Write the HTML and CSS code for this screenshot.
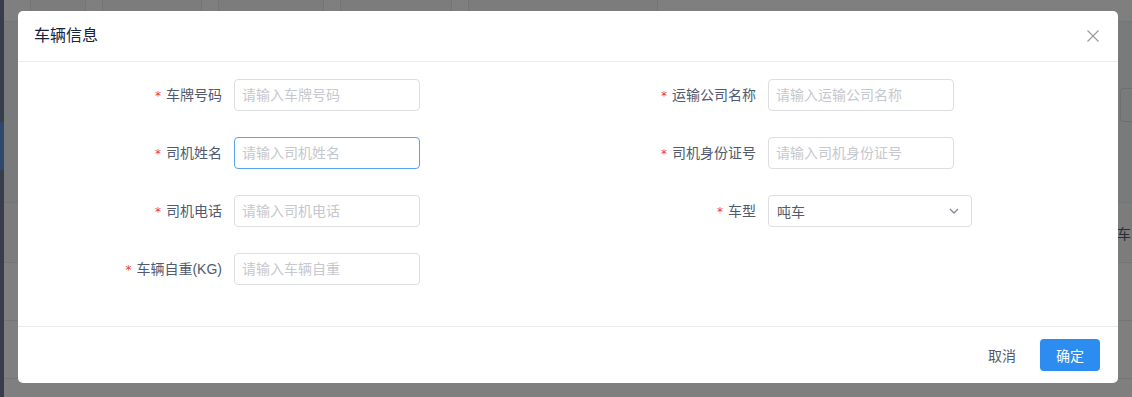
FILE: index.html
```html
<!DOCTYPE html>
<html lang="zh-CN">
<head>
    <meta charset="UTF-8">
    <title>车辆信息</title>
    <link rel="stylesheet" href="styles.css">
</head>
<body>
    <div class="page">
        <div class="sidebar">
            <div class="side-active"></div>
        </div>
        <div class="main">
            <div class="tabs">
                <span class="tab" style="width: 56px"></span>
                <span class="tab" style="width: 100px"></span>
                <span class="tab" style="width: 106px"></span>
                <span class="tab" style="width: 112px"></span>
                <span class="tab" style="width: 190px"></span>
            </div>
            <div class="search">
                <span class="search-box"></span>
            </div>
            <div class="table">
                <div class="row row-head"><span class="cell-text">车</span></div>
                <div class="row"></div>
                <div class="row"></div>
                <div class="row"></div>
            </div>
        </div>
    </div>

    <div class="mask">
        <div class="modal">
            <div class="modal-header">
                <span class="modal-title">车辆信息</span>
                <svg class="modal-close" width="14" height="14" viewBox="0 0 14 14">
                    <path d="M1.5 1.5 L12.5 12.5 M12.5 1.5 L1.5 12.5" stroke="#999" stroke-width="1.1" fill="none"/>
                </svg>
            </div>
            <div class="modal-body">
                <form class="form">
                    <div class="form-item">
                        <label class="form-label"><i>*</i>车牌号码</label>
                        <input class="input" placeholder="请输入车牌号码">
                    </div>
                    <div class="form-item">
                        <label class="form-label"><i>*</i>运输公司名称</label>
                        <input class="input" placeholder="请输入运输公司名称">
                    </div>
                    <div class="form-item">
                        <label class="form-label"><i>*</i>司机姓名</label>
                        <input class="input input-focus" placeholder="请输入司机姓名">
                    </div>
                    <div class="form-item">
                        <label class="form-label"><i>*</i>司机身份证号</label>
                        <input class="input" placeholder="请输入司机身份证号">
                    </div>
                    <div class="form-item">
                        <label class="form-label"><i>*</i>司机电话</label>
                        <input class="input" placeholder="请输入司机电话">
                    </div>
                    <div class="form-item">
                        <label class="form-label"><i>*</i>车型</label>
                        <div class="select">
                            <span>吨车</span>
                            <svg width="10" height="6" viewBox="0 0 10 6">
                                <path d="M1 1 L5 5 L9 1" stroke="#808695" stroke-width="1.3" fill="none"/>
                            </svg>
                        </div>
                    </div>
                    <div class="form-item">
                        <label class="form-label"><i>*</i>车辆自重(KG)</label>
                        <input class="input" placeholder="请输入车辆自重">
                    </div>
                </form>
            </div>
            <div class="modal-footer">
                <button class="btn btn-text" type="button">取消</button>
                <button class="btn btn-primary" type="button">确定</button>
            </div>
        </div>
    </div>
</body>
</html>
```

FILE: styles.css
```css
* {
    box-sizing: border-box;
}
body {
    margin: 0;
    font-family: "Liberation Sans", "Noto Sans CJK SC", sans-serif;
    font-size: 14px;
    color: #515a6e;
    background-color: #fff;
    overflow: hidden;
}
.page {
    display: flex;
    height: 397px;
    overflow: hidden;
}
.sidebar {
    width: 4px;
    background-color: #6f7a94;
    padding-top: 122px;
}
.side-active {
    height: 48px;
    background-color: #5d8fd6;
}
.main {
    flex: 1;
    background-color: #f3f4f6;
    overflow: hidden;
}
.tabs {
    display: flex;
    gap: 16px;
    padding: 0 0 0 26px;
    height: 22px;
    background-color: #fff;
    border-bottom: 1px solid #e8eaec;
}
.tab {
    height: 20px;
    border: 1px solid #e8eaec;
    border-top: none;
    background-color: #f8f8f9;
}
.search {
    display: flex;
    justify-content: flex-end;
    padding: 66px 0 0;
    height: 180px;
}
.search-box {
    width: 12px;
    height: 34px;
    border: 1px solid #dcdee2;
    border-right: none;
    border-radius: 4px 0 0 4px;
}
.table {
    background-color: #fff;
    border-top: 1px solid #e8eaec;
}
.row {
    height: 58px;
    border-bottom: 1px solid #e8eaec;
}
.row-head {
    display: flex;
    justify-content: flex-end;
    align-items: center;
    background-color: #f8f8f9;
    height: 60px;
}
.cell-text {
    color: #515a6e;
    padding-right: 1px;
}

/* modal */
.mask {
    position: fixed;
    inset: 0;
    background-color: rgba(0, 0, 0, 0.5);
    padding: 11px 18px;
}
.modal {
    width: 1100px;
    background-color: #fff;
    border-radius: 5px;
}
.modal-header {
    display: flex;
    justify-content: space-between;
    align-items: center;
    height: 51px;
    padding: 0 16px;
    border-bottom: 1px solid #e8eaec;
}
.modal-title {
    font-size: 16px;
    color: #17233d;
    line-height: 22px;
}
.modal-close {
    margin-right: 2px;
}
.modal-body {
    height: 264px;
    padding: 17px 16px 0;
}
.form {
    display: grid;
    grid-template-columns: 534px 534px;
    grid-auto-rows: 32px;
    row-gap: 26px;
}
.form-item {
    display: flex;
    align-items: center;
    height: 32px;
}
.form-label {
    width: 200px;
    padding-right: 12px;
    text-align: right;
    line-height: 32px;
    color: #515a6e;
}
.form-label i {
    font-style: normal;
    font-family: "DejaVu Sans", sans-serif;
    font-size: 12px;
    color: #ed4014;
    margin-right: 5px;
}
.input {
    width: 186px;
    height: 32px;
    padding: 4px 7px;
    font-family: inherit;
    font-size: 14px;
    color: #515a6e;
    border: 1px solid #dcdee2;
    border-radius: 4px;
    outline: none;
}
.input::placeholder {
    color: #c5c8ce;
}
.input-focus {
    border-color: #57a3f3;
}
.select {
    display: flex;
    justify-content: space-between;
    align-items: center;
    width: 204px;
    height: 32px;
    padding: 0 12px 0 8px;
    border: 1px solid #dcdee2;
    border-radius: 4px;
    color: #515a6e;
}
.modal-footer {
    display: flex;
    justify-content: flex-end;
    align-items: center;
    height: 57px;
    padding: 0 18px;
    border-top: 1px solid #e8eaec;
}
.btn {
    height: 32px;
    padding: 0 15px;
    font-family: inherit;
    font-size: 14px;
    border: 1px solid transparent;
    border-radius: 4px;
    cursor: pointer;
}
.btn-text {
    background: none;
    color: #515a6e;
    margin-right: 8px;
}
.btn-primary {
    width: 60px;
    background-color: #2d8cf0;
    color: #fff;
}
```
